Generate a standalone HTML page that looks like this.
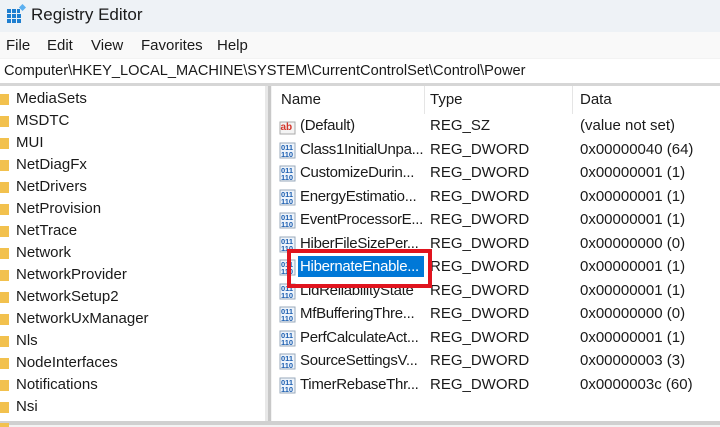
<!DOCTYPE html>
<html><head><style>
body{margin:0;width:720px;height:425px;overflow:hidden;background:#f3f3f3;font-family:"Liberation Sans",sans-serif;font-size:15px;color:#1a1a1a;position:relative}
.a{position:absolute;white-space:nowrap}
.fold{position:absolute;left:0;width:9px;height:11px;background:#f2c14e}
.ic{position:absolute;left:279px;width:17px;height:17px}
.n{letter-spacing:-0.3px}
</style></head><body>
<div class="a" style="left:0;top:0;width:720px;height:32px;background:#eef2f6"></div>
<svg class="a" style="left:6px;top:4px" width="20" height="20" viewBox="0 0 20 20"><g fill="#1f7fd0"><rect x="1" y="5" width="4" height="4"/><rect x="6" y="5" width="4" height="4"/><rect x="11" y="5" width="3" height="4"/><rect x="1" y="10" width="4" height="4"/><rect x="6" y="10" width="4" height="4"/><rect x="11" y="10" width="4" height="4"/><rect x="1" y="15" width="4" height="4"/><rect x="6" y="15" width="4" height="4"/><rect x="11" y="15" width="4" height="4"/></g><rect x="14" y="1" width="5" height="5" fill="#5cb0f0" transform="rotate(45 16.5 3.5)"/></svg>
<div class="a" style="left:31px;top:5px;font-size:17px">Registry Editor</div>
<div class="a" style="left:0;top:32px;width:720px;height:26px;background:#f9f9f9"></div>
<div class="a" style="left:6px;top:37px">File</div>
<div class="a" style="left:47px;top:37px">Edit</div>
<div class="a" style="left:91px;top:37px">View</div>
<div class="a" style="left:141px;top:37px">Favorites</div>
<div class="a" style="left:217px;top:37px">Help</div>
<div class="a" style="left:0;top:59px;width:720px;height:24px;background:#fff"></div>
<div class="a" style="left:4px;top:63px;font-size:14.6px">Computer\HKEY_LOCAL_MACHINE\SYSTEM\CurrentControlSet\Control\Power</div>
<div class="a" style="left:0;top:83px;width:720px;height:3px;background:#d6d6d6"></div>
<div class="a" style="left:0;top:86px;width:265px;height:335px;background:#fff"></div>
<div class="a" style="left:265px;top:86px;width:3px;height:335px;background:#e8e8e8"></div>
<div class="a" style="left:268px;top:86px;width:3px;height:335px;background:#c8c8c8"></div>
<div class="a" style="left:272px;top:86px;width:448px;height:335px;background:#fff"></div>
<div class="a" style="left:0;top:421px;width:720px;height:4px;background:#d0d0d0"></div>
<div style="position:absolute;left:0;top:90px">
<div class="fold" style="top:4px"></div><div class="a" style="left:16px;top:0">MediaSets</div>
<div class="fold" style="top:26px"></div><div class="a" style="left:16px;top:22px">MSDTC</div>
<div class="fold" style="top:48px"></div><div class="a" style="left:16px;top:44px">MUI</div>
<div class="fold" style="top:70px"></div><div class="a" style="left:16px;top:66px">NetDiagFx</div>
<div class="fold" style="top:92px"></div><div class="a" style="left:16px;top:88px">NetDrivers</div>
<div class="fold" style="top:114px"></div><div class="a" style="left:16px;top:110px">NetProvision</div>
<div class="fold" style="top:136px"></div><div class="a" style="left:16px;top:132px">NetTrace</div>
<div class="fold" style="top:158px"></div><div class="a" style="left:16px;top:154px">Network</div>
<div class="fold" style="top:180px"></div><div class="a" style="left:16px;top:176px">NetworkProvider</div>
<div class="fold" style="top:202px"></div><div class="a" style="left:16px;top:198px">NetworkSetup2</div>
<div class="fold" style="top:224px"></div><div class="a" style="left:16px;top:220px">NetworkUxManager</div>
<div class="fold" style="top:246px"></div><div class="a" style="left:16px;top:242px">Nls</div>
<div class="fold" style="top:268px"></div><div class="a" style="left:16px;top:264px">NodeInterfaces</div>
<div class="fold" style="top:290px"></div><div class="a" style="left:16px;top:286px">Notifications</div>
<div class="fold" style="top:312px"></div><div class="a" style="left:16px;top:308px">Nsi</div>
<div class="fold" style="top:333px;height:4px"></div><div class="a" style="left:16px;top:330px;height:1px;overflow:hidden">NUMA</div>
</div>
<div class="a" style="left:424px;top:86px;width:1px;height:28px;background:#e5e5e5"></div>
<div class="a" style="left:572px;top:86px;width:1px;height:28px;background:#e5e5e5"></div>
<div class="a" style="left:281px;top:91px">Name</div>
<div class="a" style="left:430px;top:91px">Type</div>
<div class="a" style="left:580px;top:91px">Data</div>
<div id="rows"></div>
<script>
var r=[["(Default)","REG_SZ","(value not set)"],["Class1InitialUnpa...","REG_DWORD","0x00000040 (64)"],["CustomizeDurin...","REG_DWORD","0x00000001 (1)"],["EnergyEstimatio...","REG_DWORD","0x00000001 (1)"],["EventProcessorE...","REG_DWORD","0x00000001 (1)"],["HiberFileSizePer...","REG_DWORD","0x00000000 (0)"],["HibernateEnable...","REG_DWORD","0x00000001 (1)"],["LidReliabilityState","REG_DWORD","0x00000001 (1)"],["MfBufferingThre...","REG_DWORD","0x00000000 (0)"],["PerfCalculateAct...","REG_DWORD","0x00000001 (1)"],["SourceSettingsV...","REG_DWORD","0x00000003 (3)"],["TimerRebaseThr...","REG_DWORD","0x0000003c (60)"]];
var h="";
r.forEach(function(x,i){var y=117+i*23.5;
var ic=i==0?'<svg class="ic" style="top:'+(y+1)+'px" viewBox="0 0 17 17"><path d="M1 4h15v12H1z" fill="#f4f4f4" stroke="#aaa"/><text x="1.5" y="12" font-size="10" font-weight="bold" fill="#d2352a" font-family="Liberation Sans">ab</text></svg>':'<svg class="ic" style="top:'+(y+1)+'px" viewBox="0 0 17 17"><path d="M1 1h15v15H1z" fill="#eef4fb" stroke="#9ab"/><text x="2" y="8" font-size="7.5" font-weight="bold" fill="#1d5fb0" font-family="Liberation Sans">011</text><text x="2" y="15" font-size="7.5" font-weight="bold" fill="#1d5fb0" font-family="Liberation Sans">110</text></svg>';
var sel=i==6?'background:#0078d7;color:#fff;left:298px;padding:2px 2px;top:'+(y-2)+'px;width:122px;overflow:hidden':'left:300px;top:'+y+'px';
h+=ic+'<div class="a n" style="'+sel+'">'+x[0]+'</div><div class="a" style="left:430px;top:'+y+'px">'+x[1]+'</div><div class="a" style="left:580px;top:'+y+'px">'+x[2]+'</div>';});
h+='<div class="a" style="left:287px;top:249px;width:137px;height:31px;border:4px solid #e0141e"></div>';
document.getElementById("rows").outerHTML=h;
</script>
</body></html>
